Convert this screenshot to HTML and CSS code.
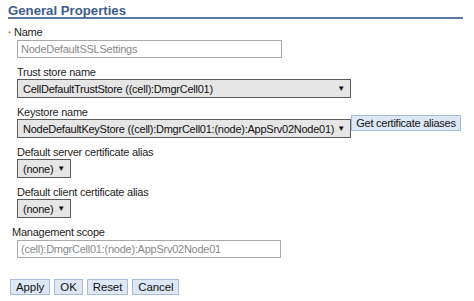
FILE: index.html
```html
<!DOCTYPE html>
<html lang="en">
<head>
    <meta charset="UTF-8">
    <title>SSL configuration</title>
    <link rel="stylesheet" href="styles.css">
</head>
<body>
    <h2 class="section-title">General Properties</h2>

    <div class="field field-first">
        <label class="req-label"><span class="req">*</span>Name</label>
        <div class="text-input name-input">NodeDefaultSSLSettings</div>
    </div>

    <div class="field">
        <label>Trust store name</label>
        <div class="select wide"><span>CellDefaultTrustStore ((cell):DmgrCell01)</span><span class="arrow">&#9660;</span></div>
    </div>

    <div class="field">
        <label>Keystore name</label>
        <div class="row">
            <div class="select wide"><span>NodeDefaultKeyStore ((cell):DmgrCell01:(node):AppSrv02Node01)</span><span class="arrow">&#9660;</span></div>
            <button class="btn btn-aliases">Get certificate aliases</button>
        </div>
    </div>

    <div class="field">
        <label>Default server certificate alias</label>
        <div class="select small"><span>(none)</span><span class="arrow">&#9660;</span></div>
    </div>

    <div class="field">
        <label>Default client certificate alias</label>
        <div class="select small"><span>(none)</span><span class="arrow">&#9660;</span></div>
    </div>

    <div class="field field-scope">
        <label>Management scope</label>
        <div class="text-input scope-input">(cell):DmgrCell01:(node):AppSrv02Node01</div>
    </div>

    <div class="actions">
        <button class="btn">Apply</button>
        <button class="btn">OK</button>
        <button class="btn">Reset</button>
        <button class="btn">Cancel</button>
    </div>
</body>
</html>
```

FILE: styles.css
```css
body {
    margin: 0;
    padding: 0;
    background: #ffffff;
    color: #1e1e1e;
    font-family: 'Liberation Sans', Arial, sans-serif;
    font-size: 11px;
    letter-spacing: -0.25px;
    white-space: nowrap;
}

.section-title {
    margin: 0 11px 0 8px;
    padding-top: 4px;
    font-size: 13.2px;
    line-height: 13px;
    font-weight: bold;
    letter-spacing: 0;
    color: #3d5d8c;
    border-bottom: 2px solid #5a7aa2;
}

.field {
    margin-top: 8px;
    padding-left: 17px;
}

.field-first {
    margin-top: 6px;
}

.field label {
    display: block;
    line-height: 13px;
    height: 13px;
}

.req-label {
    margin-left: -9px;
    height: 15px !important;
    line-height: 15px !important;
}

.req {
    display: inline-block;
    width: 5px;
    margin-right: 1px;
    font-size: 8px;
    color: #b8641e;
    vertical-align: top;
    line-height: 17px;
}

.text-input {
    box-sizing: border-box;
    height: 18px;
    line-height: 16px;
    padding: 0 3px;
    border: 1px solid #a9a9a9;
    color: #8a8a8a;
    background: #fff;
}

.name-input {
    width: 265px;
}

.scope-input {
    width: 264px;
}

.select {
    box-sizing: border-box;
    height: 19px;
    display: flex;
    align-items: center;
    justify-content: space-between;
    padding: 0 5px 0 5px;
    border: 1px solid #5c5c5c;
    background: #e6e6e6;
    color: #111;
}

.select .arrow {
    font-size: 8px;
    line-height: 1;
}

.wide {
    width: 334px;
}

.small {
    width: 54px;
}

.row {
    display: flex;
    align-items: flex-start;
}

.btn {
    box-sizing: border-box;
    height: 16px;
    margin: 0;
    padding: 0 5px;
    font-family: inherit;
    font-size: 11.5px;
    line-height: 14px;
    letter-spacing: -0.1px;
    color: #111;
    background: #dde7f5;
    border: 1px solid #a9bbd3;
    border-radius: 0;
}

.btn-aliases {
    width: 110px;
    padding: 0;
    font-size: 11px;
    letter-spacing: -0.25px;
    margin-top: -4px;
}

.field-scope label {
    margin-left: -5px;
    margin-bottom: 1px;
}

.actions {
    display: flex;
    gap: 4px;
    margin: 21px 0 0 10px;
}
```
